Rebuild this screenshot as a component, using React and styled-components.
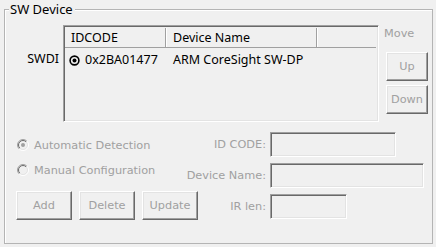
import React from 'react';
import styled, { createGlobalStyle } from 'styled-components';

const GlobalStyle = createGlobalStyle`
  html, body {
    margin: 0;
    padding: 0;
    background: #f0f0f0;
  }
  body {
    width: 436px;
    height: 247px;
    overflow: hidden;
    font-family: "Noto Sans", "Liberation Sans", sans-serif;
  }
`;

const Page = styled.div`
  padding: 9px 4px 0 4px;
`;

const Group = styled.div`
  position: relative;
  box-sizing: border-box;
  width: 429px;
  height: 235px;
  border: 1px solid #b4b4b4;
  box-shadow: inset 1px 1px 0 #fff;
`;

const Legend = styled.span`
  position: absolute;
  top: -9px;
  left: 4px;
  padding: 0 2px 0 1px;
  background: #f0f0f0;
  font-size: 13px;
  line-height: 16px;
  color: #000;
`;

const TopRow = styled.div`
  display: flex;
  margin-top: 15px;
  height: 97px;
`;

const SideLabel = styled.div`
  box-sizing: border-box;
  width: 58px;
  padding: 26px 4px 0 0;
  text-align: right;
  font-size: 12.5px;
  line-height: 16px;
`;

const ListBox = styled.div`
  box-sizing: border-box;
  width: 316px;
  height: 97px;
  border-top: 1px solid #a0a0a0;
  border-left: 1px solid #a0a0a0;
  border-right: 1px solid #fff;
  border-bottom: 1px solid #fff;
  box-shadow: inset 1px 1px 0 #696969, inset -1px -1px 0 #e3e3e3;
  padding: 2px 2px 0 1px;
  overflow: hidden;
`;

const HeaderRow = styled.div`
  display: flex;
  height: 19px;
  border-bottom: 1px solid #a0a0a0;
`;

const HeaderCell = styled.div`
  box-sizing: border-box;
  width: ${(p) => p.$w}px;
  flex: ${(p) => (p.$w ? 'none' : '1')};
  padding-left: ${(p) => p.$pad}px;
  border-right: ${(p) => (p.$last ? 'none' : '1px solid #a0a0a0')};
  box-shadow: ${(p) => (p.$first ? 'none' : 'inset 1px 0 0 #fff')};
  font-size: 12.5px;
  line-height: 19px;
  color: #000;
  white-space: nowrap;
`;

const DataRow = styled.div`
  display: flex;
  height: 18px;
  margin-top: 3px;
  align-items: center;
`;

const DataCell = styled.div`
  box-sizing: border-box;
  width: ${(p) => p.$w}px;
  padding-left: ${(p) => p.$pad}px;
  display: flex;
  align-items: center;
  gap: 5px;
  font-size: 12.5px;
  line-height: 18px;
  white-space: nowrap;
`;

const MoveColumn = styled.div`
  display: flex;
  flex-direction: column;
  margin-left: 5px;
  width: 44px;
`;

const MoveLabel = styled.div`
  margin-top: 1px;
  height: 16px;
  font-family: "DejaVu Sans", sans-serif;
  font-size: 11.3px;
  line-height: 16px;
  color: #a0a0a0;
`;

const Button = styled.button`
  box-sizing: border-box;
  width: ${(p) => p.$w}px;
  height: 29px;
  margin: 0;
  padding: 0;
  background: #f0f0f0;
  border: 1px solid;
  border-color: #fff #696969 #696969 #fff;
  box-shadow: inset -1px -1px 0 #a0a0a0, inset 1px 1px 0 #e3e3e3;
  font-family: "DejaVu Sans", sans-serif;
  font-size: 11.3px;
  color: #a0a0a0;
  cursor: default;
`;

const UpButton = styled(Button)`
  margin: 10px 0 0 2px;
`;

const DownButton = styled(Button)`
  margin: 4px 0 0 2px;
`;

const Bottom = styled.div`
  display: flex;
`;

const LeftBlock = styled.div`
  width: 178px;
  padding-left: 11px;
  box-sizing: border-box;
`;

const RadioRow = styled.div`
  display: flex;
  align-items: center;
  gap: 5px;
  height: 20px;
  margin-top: ${(p) => p.$mt}px;
  padding-left: 1px;
  font-family: "DejaVu Sans", sans-serif;
  font-size: 11.3px;
  color: #a0a0a0;
  white-space: nowrap;
`;

const ButtonRow = styled.div`
  display: flex;
  gap: 7px;
  margin-top: 11px;
  width: 190px;
`;

const FieldGrid = styled.div`
  display: grid;
  grid-template-columns: 83px auto;
  column-gap: 4px;
  row-gap: 5px;
  margin-top: 9px;
  align-items: center;
`;

const FieldLabel = styled.div`
  text-align: right;
  font-family: "DejaVu Sans", sans-serif;
  font-size: 11.3px;
  color: #a0a0a0;
  white-space: nowrap;
`;

const Input = styled.div`
  box-sizing: border-box;
  width: ${(p) => p.$w}px;
  height: 25px;
  background: #f0f0f0;
  border: 1px solid;
  border-color: #a0a0a0 #fff #fff #a0a0a0;
  box-shadow: inset 1px 1px 0 #696969, inset -1px -1px 0 #e3e3e3;
`;

function RowMark() {
  return (
    <svg width="11" height="11" viewBox="0 0 11 11">
      <circle cx="5.5" cy="5.5" r="4.4" fill="none" stroke="#000" strokeWidth="1.6" />
      <circle cx="5.5" cy="5.5" r="2" fill="#000" />
    </svg>
  );
}

function Radio({ checked }) {
  return (
    <svg width="12" height="12" viewBox="0 0 12 12">
      <defs>
        <linearGradient id="rOuter" x1="0" y1="0" x2="1" y2="1">
          <stop offset="0.45" stopColor="#a0a0a0" />
          <stop offset="0.55" stopColor="#ffffff" />
        </linearGradient>
        <linearGradient id="rInner" x1="0" y1="0" x2="1" y2="1">
          <stop offset="0.45" stopColor="#696969" />
          <stop offset="0.55" stopColor="#e3e3e3" />
        </linearGradient>
      </defs>
      <circle cx="6" cy="6" r="5.5" fill="#f0f0f0" stroke="url(#rOuter)" strokeWidth="1" />
      <circle cx="6" cy="6" r="4.5" fill="none" stroke="url(#rInner)" strokeWidth="1" />
      {checked && <circle cx="6" cy="6" r="2" fill="#a0a0a0" />}
    </svg>
  );
}

export default function App() {
  return (
    <Page>
      <GlobalStyle />
      <Group>
        <Legend>SW Device</Legend>
        <TopRow>
          <SideLabel>SWDI</SideLabel>
          <ListBox>
            <HeaderRow>
              <HeaderCell $w={101} $pad={6} $first>IDCODE</HeaderCell>
              <HeaderCell $w={151} $pad={7}>Device Name</HeaderCell>
              <HeaderCell $last />
            </HeaderRow>
            <DataRow>
              <DataCell $w={101} $pad={4}>
                <RowMark />
                0x2BA01477
              </DataCell>
              <DataCell $w={151} $pad={7}>ARM CoreSight SW-DP</DataCell>
            </DataRow>
          </ListBox>
          <MoveColumn>
            <MoveLabel>Move</MoveLabel>
            <UpButton $w={42}>Up</UpButton>
            <DownButton $w={42}>Down</DownButton>
          </MoveColumn>
        </TopRow>
        <Bottom>
          <LeftBlock>
            <RadioRow $mt={13}>
              <Radio checked />
              Automatic Detection
            </RadioRow>
            <RadioRow $mt={5}>
              <Radio />
              Manual Configuration
            </RadioRow>
            <ButtonRow>
              <Button $w={56}>Add</Button>
              <Button $w={56}>Delete</Button>
              <Button $w={56}>Update</Button>
            </ButtonRow>
          </LeftBlock>
          <FieldGrid>
            <FieldLabel>ID CODE:</FieldLabel>
            <Input $w={126} />
            <FieldLabel>Device Name:</FieldLabel>
            <Input $w={154} />
            <FieldLabel>IR len:</FieldLabel>
            <Input $w={77} />
          </FieldGrid>
        </Bottom>
      </Group>
    </Page>
  );
}
